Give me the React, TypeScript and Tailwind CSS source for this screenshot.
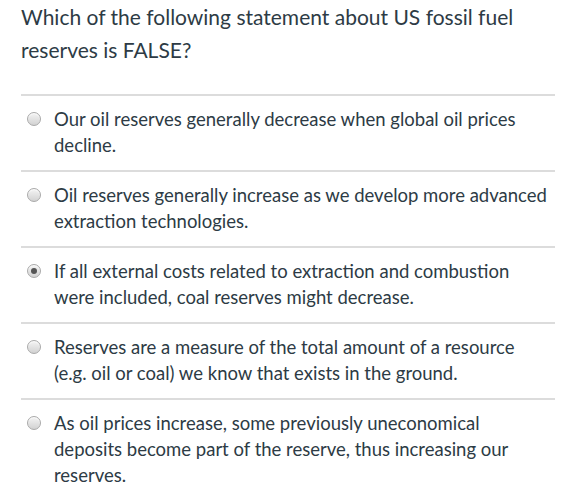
import React from 'react';

const answers = [
  'Our oil reserves generally decrease when global oil prices decline.',
  'Oil reserves generally increase as we develop more advanced extraction technologies.',
  'If all external costs related to extraction and combustion were included, coal reserves might decrease.',
  'Reserves are a measure of the total amount of a resource (e.g. oil or coal) we know that exists in the ground.',
  'As oil prices increase, some previously uneconomical deposits become part of the reserve, thus increasing our reserves.',
];

const Radio: React.FC<{ checked: boolean }> = ({ checked }) => (
  <span className="mt-[6px] flex h-[14px] w-[14px] shrink-0 items-center justify-center rounded-full border border-[#a9a9a9] bg-gradient-to-b from-[#f4f4f4] to-[#d2d2d2] shadow-[inset_0_1px_1px_rgba(255,255,255,0.8)]">
    {checked && <span className="h-[6px] w-[6px] rounded-full bg-[#555]" />}
  </span>
);

const App: React.FC = () => {
  const selected = 2;

  return (
    <div className="min-h-screen bg-white pl-[21px] pr-[11px] text-[#2d3b45]" style={{ fontFamily: 'Lato, "Open Sans", sans-serif' }}>
      <h2 className="text-[21px] leading-[33px] font-normal">
        Which of the following statement about US fossil fuel reserves is FALSE?
      </h2>
      <div className="mt-[28px]">
        {answers.map((text, i) => (
          <div key={i} className="flex gap-[13px] border-t-2 border-[#dcdcdc] pt-[10px] pb-[12px] pl-[6px]">
            <Radio checked={i === selected} />
            <p className="mr-[5px] text-[18.5px] leading-[26px]">{text}</p>
          </div>
        ))}
      </div>
    </div>
  );
};

export default App;
